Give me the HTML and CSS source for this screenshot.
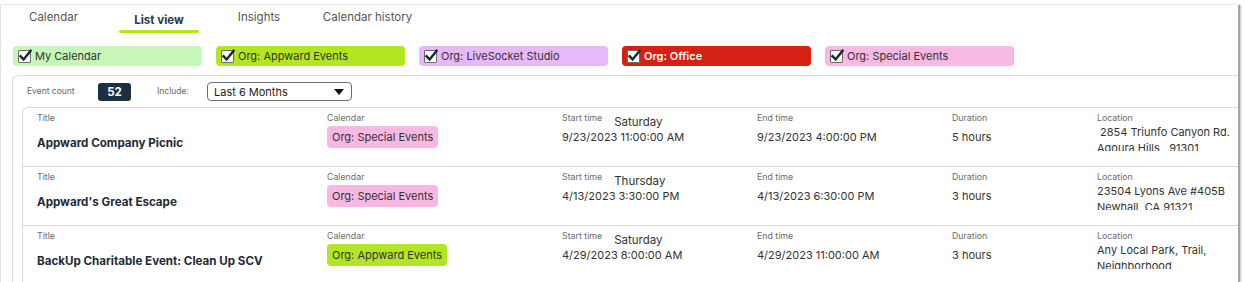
FILE: index.html
```html
<!DOCTYPE html>
<html lang="en">
<head>
<meta charset="utf-8">
<title>List view</title>
<link rel="stylesheet" href="styles.css">
</head>
<body>
<div class="window">
  <nav class="tabs">
    <div class="tab tab-calendar">Calendar</div>
    <div class="tab tab-list active">List view</div>
    <div class="tab tab-insights">Insights</div>
    <div class="tab tab-history">Calendar history</div>
  </nav>

  <div class="filters">
    <div class="filter f-my"><span class="cb"><svg viewBox="0 0 14 14"><path d="M2.5 7.2 L5.6 10.4 L12.6 1.8"/></svg></span>My Calendar</div>
    <div class="filter f-appward"><span class="cb"><svg viewBox="0 0 14 14"><path d="M2.5 7.2 L5.6 10.4 L12.6 1.8"/></svg></span>Org: Appward Events</div>
    <div class="filter f-live"><span class="cb"><svg viewBox="0 0 14 14"><path d="M2.5 7.2 L5.6 10.4 L12.6 1.8"/></svg></span>Org: LiveSocket Studio</div>
    <div class="filter f-office"><span class="cb"><svg viewBox="0 0 14 14"><path d="M2.5 7.2 L5.6 10.4 L12.6 1.8"/></svg></span>Org: Office</div>
    <div class="filter f-special"><span class="cb"><svg viewBox="0 0 14 14"><path d="M2.5 7.2 L5.6 10.4 L12.6 1.8"/></svg></span>Org: Special Events</div>
  </div>

  <section class="panel">
    <div class="panel-head">
      <span class="small-label count-label">Event count</span>
      <span class="count-badge">52</span>
      <span class="small-label include-label">Include:</span>
      <div class="select">
        <span>Last 6 Months</span>
        <svg class="caret" viewBox="0 0 10 6"><path d="M0 0 H10 L5 6 Z"/></svg>
      </div>
    </div>

    <div class="list">
      <div class="row">
        <div class="cell">
          <div class="lbl">Title</div>
          <div class="title">Appward Company Picnic</div>
        </div>
        <div class="cell">
          <div class="lbl">Calendar</div>
          <span class="cal-chip chip-special">Org: Special Events</span>
        </div>
        <div class="cell">
          <div class="start-head"><span class="lbl">Start time</span><span class="day">Saturday</span></div>
          <div class="val">9/23/2023 11:00:00 AM</div>
        </div>
        <div class="cell">
          <div class="lbl">End time</div>
          <div class="val val-gap">9/23/2023 4:00:00 PM</div>
        </div>
        <div class="cell">
          <div class="lbl">Duration</div>
          <div class="val val-gap">5 hours</div>
        </div>
        <div class="cell">
          <div class="lbl">Location</div>
          <div class="loc">&nbsp;2854 Triunfo Canyon Rd.<br>Agoura Hills,&nbsp; 91301</div>
        </div>
      </div>

      <div class="row">
        <div class="cell">
          <div class="lbl">Title</div>
          <div class="title">Appward's Great Escape</div>
        </div>
        <div class="cell">
          <div class="lbl">Calendar</div>
          <span class="cal-chip chip-special">Org: Special Events</span>
        </div>
        <div class="cell">
          <div class="start-head"><span class="lbl">Start time</span><span class="day">Thursday</span></div>
          <div class="val">4/13/2023 3:30:00 PM</div>
        </div>
        <div class="cell">
          <div class="lbl">End time</div>
          <div class="val val-gap">4/13/2023 6:30:00 PM</div>
        </div>
        <div class="cell">
          <div class="lbl">Duration</div>
          <div class="val val-gap">3 hours</div>
        </div>
        <div class="cell">
          <div class="lbl">Location</div>
          <div class="loc">23504 Lyons Ave #405B<br>Newhall, CA 91321</div>
        </div>
      </div>

      <div class="row">
        <div class="cell">
          <div class="lbl">Title</div>
          <div class="title">BackUp Charitable Event: Clean Up SCV</div>
        </div>
        <div class="cell">
          <div class="lbl">Calendar</div>
          <span class="cal-chip chip-appward">Org: Appward Events</span>
        </div>
        <div class="cell">
          <div class="start-head"><span class="lbl">Start time</span><span class="day">Saturday</span></div>
          <div class="val">4/29/2023 8:00:00 AM</div>
        </div>
        <div class="cell">
          <div class="lbl">End time</div>
          <div class="val val-gap">4/29/2023 11:00:00 AM</div>
        </div>
        <div class="cell">
          <div class="lbl">Duration</div>
          <div class="val val-gap">3 hours</div>
        </div>
        <div class="cell">
          <div class="lbl">Location</div>
          <div class="loc">Any Local Park, Trail,<br>Neighborhood</div>
        </div>
      </div>
    </div>
  </section>
</div>
</body>
</html>
```

FILE: styles.css
```css
* { box-sizing: border-box; }

html, body {
  margin: 0;
  padding: 0;
  background: #ffffff;
}

body {
  font-family: Inter, "Noto Sans", "Liberation Sans", sans-serif;
  color: #333;
  overflow: hidden;
}

.window {
  margin-top: 5px;
  width: 1240px;
  height: 277px;
  border-left: 1px solid #e2e2e2;
  border-right: 2px solid #a4a4a4;
  box-shadow: 1px 0 2px rgba(0, 0, 0, 0.25);
  overflow: hidden;
}

/* Tabs */
.tabs {
  display: flex;
  align-items: flex-start;
  height: 29px;
  padding-top: 5px;
}

.tab {
  font-size: 11.5px;
  line-height: 14px;
  color: #555;
  text-align: center;
  white-space: nowrap;
}

.tab-calendar { width: 81px; margin-left: 12px; }
.tab-list { width: 80px; margin-left: 25px; }
.tab-insights { width: 80px; margin-left: 20px; }
.tab-history { width: 111px; margin-left: 13px; }

.tab.active {
  padding-top: 3px;
  font-weight: 700;
  color: #2b3945;
}

.tab.active::after {
  content: "";
  display: block;
  height: 3px;
  margin-top: 3px;
  border-radius: 2px;
  background: #b3e622;
}

/* Filter chips */
.filters {
  display: flex;
  gap: 14px;
  margin-top: 12px;
  padding-left: 12px;
}

.filter {
  display: flex;
  align-items: center;
  width: 189px;
  height: 20px;
  padding-left: 5px;
  border-radius: 4px;
  font-size: 11px;
  color: #333;
  white-space: nowrap;
}

.f-my { background: #c6f7b8; }
.f-appward { background: #b3e622; }
.f-live { background: #e8b9f8; }
.f-office { background: #d42114; color: #fff; font-weight: 600; }
.f-special { background: #f7b8e3; }

.cb {
  position: relative;
  flex: none;
  width: 13px;
  height: 13px;
  margin-right: 4px;
  background: #fff;
  border: 1px solid #6b6b6b;
  border-radius: 1px;
}

.cb svg {
  position: absolute;
  left: -1px;
  top: -2px;
  width: 14px;
  height: 14px;
  fill: none;
  stroke: #1c2833;
  stroke-width: 2.4;
  stroke-linecap: square;
}

/* Panel */
.panel {
  margin-top: 9px;
  margin-left: 11px;
  width: 1300px;
  border-top: 1px solid #dcdcdc;
  border-left: 1px solid #dcdcdc;
  border-top-left-radius: 6px;
  padding-left: 9px;
}

.panel-head {
  display: flex;
  align-items: center;
  height: 25px;
  padding-top: 6px;
  padding-left: 5px;
}

.small-label {
  font-size: 8.5px;
  color: #666;
  white-space: nowrap;
  margin-top: -2px;
}

.count-label { width: 71px; }

.count-badge {
  width: 33px;
  height: 18px;
  line-height: 18px;
  border-radius: 3px;
  background: #1b3142;
  color: #fff;
  font-size: 11.5px;
  font-weight: 700;
  text-align: center;
}

.include-label { width: 50px; margin-left: 26px; }

.select {
  display: flex;
  align-items: center;
  justify-content: space-between;
  width: 145px;
  height: 19px;
  padding: 0 7px 0 6px;
  border: 1px solid #6f6f6f;
  border-radius: 4px;
  font-size: 11px;
  color: #222;
}

.caret {
  width: 10px;
  height: 6px;
  fill: #111;
}

/* List */
.list {
  margin-top: 6px;
  border-top: 1px solid #dadada;
  border-left: 1px solid #dadada;
  border-top-left-radius: 6px;
}

.row {
  display: grid;
  grid-template-columns: 290px 235px 195px 195px 145px 160px;
  height: 58px;
  padding-left: 14px;
  padding-top: 4px;
}

.row + .row {
  height: 59px;
  border-top: 1px solid #dadada;
}

.cell { min-width: 0; }

.lbl {
  font-size: 8.8px;
  line-height: 11px;
  color: #6c6c6c;
  white-space: nowrap;
}

.title {
  margin-top: 13px;
  font-size: 11.6px;
  line-height: 14px;
  font-weight: 700;
  color: #1e2b36;
  white-space: nowrap;
}

.cal-chip {
  display: inline-block;
  margin-top: 3px;
  height: 22px;
  line-height: 22px;
  padding: 0 5px;
  border-radius: 4px;
  font-size: 11px;
  color: #333;
  white-space: nowrap;
}

.chip-special { background: #f7b8e3; }
.chip-appward { background: #b3e622; }

.start-head {
  display: flex;
  align-items: flex-start;
  height: 17px;
}

.day {
  margin-top: 3px;
  margin-left: 12px;
  font-size: 11.5px;
  line-height: 14px;
  color: #333;
}

.val {
  font-size: 11px;
  line-height: 16px;
  color: #333;
  white-space: nowrap;
}

.val-gap { margin-top: 6px; }

.loc {
  margin-top: 1px;
  height: 27px;
  overflow: hidden;
  font-size: 11px;
  line-height: 16px;
  color: #333;
  white-space: nowrap;
}
```
